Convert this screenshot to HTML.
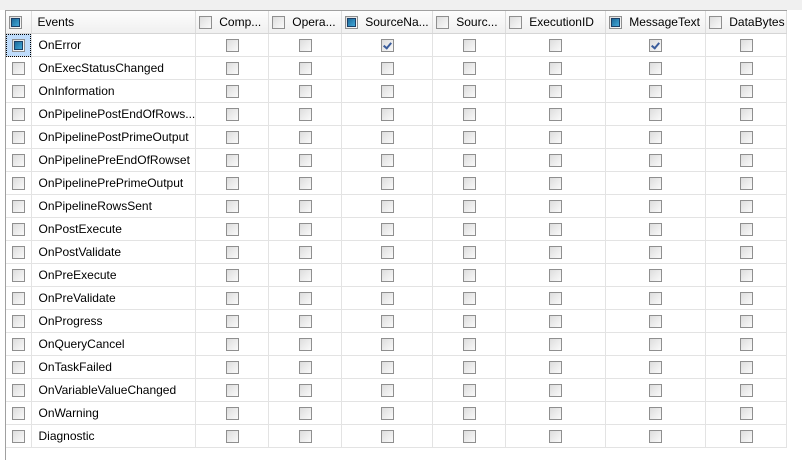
<!DOCTYPE html><html><head><style>
body{margin:0;width:802px;height:460px;background:#fff;font-family:"Liberation Sans",sans-serif;font-size:12px;color:#000;overflow:hidden;position:relative}
.top{position:absolute;left:0;top:0;width:802px;height:10px;background:#f0f0f0}
.grid{position:absolute;left:5px;top:10px;border-left:1px solid #a0a0a0;border-top:1px solid #a0a0a0}
table{border-collapse:collapse;table-layout:fixed}
td{height:22px;border-right:1px solid #e3e3e3;border-bottom:1px solid #e3e3e3;padding:0;text-align:center;white-space:nowrap;overflow:hidden}
tr.h td{background:linear-gradient(#fdfdfd,#f0f0f0);border-right:1px solid #dcdcdc;border-bottom:1px solid #d5d5d5;text-align:left;height:22px}
td.n{text-align:left;padding-left:7px}
.cb{display:inline-block;width:11px;height:11px;border:1px solid #8f8f8f;background:linear-gradient(135deg,#dcdcdc,#fafafa);vertical-align:middle;position:relative;box-sizing:content-box}
.cb::after{content:"";position:absolute;left:1px;top:1px;width:9px;height:9px;background:linear-gradient(135deg,#e0e0e0,#f7f7f7);border:0}
.b::after{left:1px;top:1px;width:7px;height:7px;background:linear-gradient(135deg,#1c6a9a,#42a8d8);border:1px solid #1b3f66}
.k::after{content:"";position:absolute;left:3px;top:1px;width:3px;height:6px;border:solid #3b5d9c;border-width:0 2px 2px 0;background:none;transform:rotate(40deg)}
tr.h .cb{margin:0 7px 0 3px}
.sel{background:#bfdcfb;outline:1px dotted #000;outline-offset:-1px}
</style></head><body><div class="top"></div>
<div class="grid"><table>
<colgroup><col style="width:25px"><col style="width:164px"><col style="width:73px"><col style="width:73px"><col style="width:91px"><col style="width:73px"><col style="width:100px"><col style="width:100px"><col style="width:81px"></colgroup>
<tr class="h"><td><span class="cb b"></span></td><td style="padding-left:6px">Events</td><td><span class="cb"></span>Comp...</td><td><span class="cb"></span>Opera...</td><td><span class="cb b"></span>SourceNa...</td><td><span class="cb"></span>Sourc...</td><td><span class="cb"></span>ExecutionID</td><td><span class="cb b"></span>MessageText</td><td><span class="cb"></span>DataBytes</td></tr>
<tr><td class="sel"><span class="cb b"></span></td><td class="n">OnError</td><td><span class="cb"></span></td><td><span class="cb"></span></td><td><span class="cb k"></span></td><td><span class="cb"></span></td><td><span class="cb"></span></td><td><span class="cb k"></span></td><td><span class="cb"></span></td></tr>
<tr><td><span class="cb"></span></td><td class="n">OnExecStatusChanged</td><td><span class="cb"></span></td><td><span class="cb"></span></td><td><span class="cb"></span></td><td><span class="cb"></span></td><td><span class="cb"></span></td><td><span class="cb"></span></td><td><span class="cb"></span></td></tr>
<tr><td><span class="cb"></span></td><td class="n">OnInformation</td><td><span class="cb"></span></td><td><span class="cb"></span></td><td><span class="cb"></span></td><td><span class="cb"></span></td><td><span class="cb"></span></td><td><span class="cb"></span></td><td><span class="cb"></span></td></tr>
<tr><td><span class="cb"></span></td><td class="n">OnPipelinePostEndOfRows...</td><td><span class="cb"></span></td><td><span class="cb"></span></td><td><span class="cb"></span></td><td><span class="cb"></span></td><td><span class="cb"></span></td><td><span class="cb"></span></td><td><span class="cb"></span></td></tr>
<tr><td><span class="cb"></span></td><td class="n">OnPipelinePostPrimeOutput</td><td><span class="cb"></span></td><td><span class="cb"></span></td><td><span class="cb"></span></td><td><span class="cb"></span></td><td><span class="cb"></span></td><td><span class="cb"></span></td><td><span class="cb"></span></td></tr>
<tr><td><span class="cb"></span></td><td class="n">OnPipelinePreEndOfRowset</td><td><span class="cb"></span></td><td><span class="cb"></span></td><td><span class="cb"></span></td><td><span class="cb"></span></td><td><span class="cb"></span></td><td><span class="cb"></span></td><td><span class="cb"></span></td></tr>
<tr><td><span class="cb"></span></td><td class="n">OnPipelinePrePrimeOutput</td><td><span class="cb"></span></td><td><span class="cb"></span></td><td><span class="cb"></span></td><td><span class="cb"></span></td><td><span class="cb"></span></td><td><span class="cb"></span></td><td><span class="cb"></span></td></tr>
<tr><td><span class="cb"></span></td><td class="n">OnPipelineRowsSent</td><td><span class="cb"></span></td><td><span class="cb"></span></td><td><span class="cb"></span></td><td><span class="cb"></span></td><td><span class="cb"></span></td><td><span class="cb"></span></td><td><span class="cb"></span></td></tr>
<tr><td><span class="cb"></span></td><td class="n">OnPostExecute</td><td><span class="cb"></span></td><td><span class="cb"></span></td><td><span class="cb"></span></td><td><span class="cb"></span></td><td><span class="cb"></span></td><td><span class="cb"></span></td><td><span class="cb"></span></td></tr>
<tr><td><span class="cb"></span></td><td class="n">OnPostValidate</td><td><span class="cb"></span></td><td><span class="cb"></span></td><td><span class="cb"></span></td><td><span class="cb"></span></td><td><span class="cb"></span></td><td><span class="cb"></span></td><td><span class="cb"></span></td></tr>
<tr><td><span class="cb"></span></td><td class="n">OnPreExecute</td><td><span class="cb"></span></td><td><span class="cb"></span></td><td><span class="cb"></span></td><td><span class="cb"></span></td><td><span class="cb"></span></td><td><span class="cb"></span></td><td><span class="cb"></span></td></tr>
<tr><td><span class="cb"></span></td><td class="n">OnPreValidate</td><td><span class="cb"></span></td><td><span class="cb"></span></td><td><span class="cb"></span></td><td><span class="cb"></span></td><td><span class="cb"></span></td><td><span class="cb"></span></td><td><span class="cb"></span></td></tr>
<tr><td><span class="cb"></span></td><td class="n">OnProgress</td><td><span class="cb"></span></td><td><span class="cb"></span></td><td><span class="cb"></span></td><td><span class="cb"></span></td><td><span class="cb"></span></td><td><span class="cb"></span></td><td><span class="cb"></span></td></tr>
<tr><td><span class="cb"></span></td><td class="n">OnQueryCancel</td><td><span class="cb"></span></td><td><span class="cb"></span></td><td><span class="cb"></span></td><td><span class="cb"></span></td><td><span class="cb"></span></td><td><span class="cb"></span></td><td><span class="cb"></span></td></tr>
<tr><td><span class="cb"></span></td><td class="n">OnTaskFailed</td><td><span class="cb"></span></td><td><span class="cb"></span></td><td><span class="cb"></span></td><td><span class="cb"></span></td><td><span class="cb"></span></td><td><span class="cb"></span></td><td><span class="cb"></span></td></tr>
<tr><td><span class="cb"></span></td><td class="n">OnVariableValueChanged</td><td><span class="cb"></span></td><td><span class="cb"></span></td><td><span class="cb"></span></td><td><span class="cb"></span></td><td><span class="cb"></span></td><td><span class="cb"></span></td><td><span class="cb"></span></td></tr>
<tr><td><span class="cb"></span></td><td class="n">OnWarning</td><td><span class="cb"></span></td><td><span class="cb"></span></td><td><span class="cb"></span></td><td><span class="cb"></span></td><td><span class="cb"></span></td><td><span class="cb"></span></td><td><span class="cb"></span></td></tr>
<tr><td><span class="cb"></span></td><td class="n">Diagnostic</td><td><span class="cb"></span></td><td><span class="cb"></span></td><td><span class="cb"></span></td><td><span class="cb"></span></td><td><span class="cb"></span></td><td><span class="cb"></span></td><td><span class="cb"></span></td></tr>
</table></div>
<div style="position:absolute;left:5px;top:448px;width:1px;height:12px;background:#a0a0a0"></div>
</body></html>
